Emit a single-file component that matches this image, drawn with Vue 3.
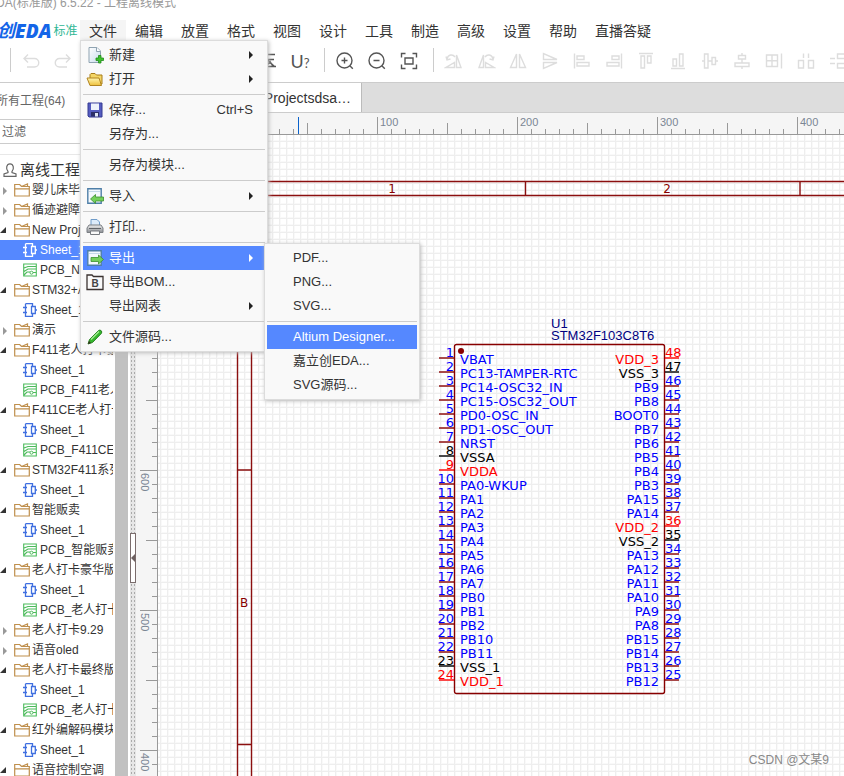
<script setup>
const menus = ['文件', '编辑', '放置', '格式', '视图', '设计', '工具', '制造', '高级', '设置', '帮助', '直播答疑']

const fileMenu = [
  { text: '新建', icon: 'm-new', more: true },
  { text: '打开', icon: 'm-open', more: true },
  { line: true },
  { text: '保存...', icon: 'm-save', key: 'Ctrl+S' },
  { text: '另存为...' },
  { line: true },
  { text: '另存为模块...' },
  { line: true },
  { text: '导入', icon: 'm-import', more: true },
  { line: true },
  { text: '打印...', icon: 'm-print' },
  { line: true },
  {
    text: '导出',
    icon: 'm-export',
    more: true,
    on: true,
    sub: [
      { text: 'PDF...' },
      { text: 'PNG...' },
      { text: 'SVG...' },
      { line: true },
      { text: 'Altium Designer...', on: true },
      { text: '嘉立创EDA...' },
      { text: 'SVG源码...' }
    ]
  },
  { text: '导出BOM...', icon: 'm-bom' },
  { text: '导出网表', more: true },
  { line: true },
  { text: '文件源码...', icon: 'm-pen' }
]

const editTools = [
  { id: 't-undo', label: '撤销' },
  { id: 't-redo', label: '重做' }
]
const viewTools = [
  { id: 't-in', label: '放大' },
  { id: 't-out', label: '缩小' },
  { id: 't-fit', label: '适合窗口' }
]
const alignTools = [
  { id: 't-rotl', label: '左旋转' },
  { id: 't-rotr', label: '右旋转' },
  { id: 't-fliph', label: '水平翻转' },
  { id: 't-flipv', label: '垂直翻转' },
  { id: 't-al', label: '左对齐' },
  { id: 't-ar', label: '右对齐' },
  { id: 't-at', label: '顶部对齐' },
  { id: 't-ab', label: '底部对齐' },
  { id: 't-cv', label: '垂直居中' },
  { id: 't-ch', label: '水平居中' },
  { id: 't-grid', label: '对齐网格' },
  { id: 't-dh', label: '水平等距' },
  { id: 't-dv', label: '垂直等距' }
]

const sheet = { kind: 'sheet', text: 'Sheet_1' }
const tree = [
  { kind: 'folder', text: '婴儿床毕业设计' },
  { kind: 'folder', text: '循迹避障小车' },
  { kind: 'folder', open: true, text: 'New Project' },
  { kind: 'sheet', text: 'Sheet_1', on: true },
  { kind: 'pcb', text: 'PCB_New Project' },
  { kind: 'folder', open: true, text: 'STM32+A9G' },
  sheet,
  { kind: 'folder', text: '演示' },
  { kind: 'folder', open: true, text: 'F411老人打卡豪华' },
  sheet,
  { kind: 'pcb', text: 'PCB_F411老人打卡' },
  { kind: 'folder', open: true, text: 'F411CE老人打卡' },
  sheet,
  { kind: 'pcb', text: 'PCB_F411CE老人' },
  { kind: 'folder', open: true, text: 'STM32F411系列' },
  sheet,
  { kind: 'folder', open: true, text: '智能贩卖' },
  sheet,
  { kind: 'pcb', text: 'PCB_智能贩卖' },
  { kind: 'folder', open: true, text: '老人打卡豪华版' },
  sheet,
  { kind: 'pcb', text: 'PCB_老人打卡' },
  { kind: 'folder', text: '老人打卡9.29' },
  { kind: 'folder', text: '语音oled' },
  { kind: 'folder', open: true, text: '老人打卡最终版' },
  sheet,
  { kind: 'pcb', text: 'PCB_老人打卡' },
  { kind: 'folder', open: true, text: '红外编解码模块' },
  sheet,
  { kind: 'folder', open: true, text: '语音控制空调' }
]

// Ruler ticks: one every 14px, a long labelled one every ten.
const ticks = Array.from({ length: 180 }, (_, i) => {
  const n = i - 10
  return { n, size: n % 10 === 0 ? 17 : n % 5 === 0 ? 11 : 5 }
})

const leftNames = ['VBAT', 'PC13-TAMPER-RTC', 'PC14-OSC32_IN', 'PC15-OSC32_OUT', 'PD0-OSC_IN', 'PD1-OSC_OUT', 'NRST', 'VSSA', 'VDDA', 'PA0-WKUP', 'PA1', 'PA2', 'PA3', 'PA4', 'PA5', 'PA6', 'PA7', 'PB0', 'PB1', 'PB2', 'PB10', 'PB11', 'VSS_1', 'VDD_1']
const rightNames = ['VDD_3', 'VSS_3', 'PB9', 'PB8', 'BOOT0', 'PB7', 'PB6', 'PB5', 'PB4', 'PB3', 'PA15', 'PA14', 'VDD_2', 'VSS_2', 'PA13', 'PA12', 'PA11', 'PA10', 'PA9', 'PA8', 'PB15', 'PB14', 'PB13', 'PB12']
const kindOf = (name) => (name.startsWith('VDD') ? 'power' : name.startsWith('VSS') ? 'ground' : 'io')
const leftPins = leftNames.map((name, i) => ({ name, no: i + 1, y: 14 + i * 14, kind: kindOf(name) }))
const rightPins = rightNames.map((name, i) => ({ name, no: 48 - i, y: 14 + i * 14, kind: kindOf(name) }))
</script>

<template>
  <div class="app">
    <svg class="defs" aria-hidden="true">
      <defs>
        <linearGradient id="g-page" x1="0" y1="0" x2="1" y2="1">
          <stop offset="0" stop-color="#ffffff" /><stop offset="1" stop-color="#c9dced" />
        </linearGradient>
        <linearGradient id="g-gold" x1="0" y1="0" x2="0" y2="1">
          <stop offset="0" stop-color="#fff6ae" /><stop offset="1" stop-color="#edbf3c" />
        </linearGradient>
        <linearGradient id="g-print" x1="0" y1="0" x2="0" y2="1">
          <stop offset="0" stop-color="#ececec" /><stop offset="1" stop-color="#8b8f94" />
        </linearGradient>
      </defs>
      <symbol id="m-new" viewBox="0 0 18 18">
        <path d="M3 1.500h8l3.500 3.500v11.500H3z" fill="url(#g-page)" stroke="#8fa3b1" />
        <path d="M10.500 1.500v4h4" fill="#fff" stroke="#8fa3b1" />
        <path d="M10 12h2.500V9.500h2.500V12h2.500v2.500H15V17h-2.500v-2.500H10z" fill="#3fc12f" stroke="#218a1b" stroke-width=".8" />
      </symbol>
      <symbol id="m-open" viewBox="0 0 18 18">
        <path d="M4 14V4.500l1-1h4l1.500 1.500h5.500v9z" fill="#f3d565" stroke="#a87c18" />
        <path d="M1 8h12l2.500 7.500H4z" fill="url(#g-gold)" stroke="#b18420" />
      </symbol>
      <symbol id="m-save" viewBox="0 0 18 18">
        <path d="M2 2h14v14H3l-1-1z" fill="#555cc0" stroke="#343a92" />
        <path d="M5 2.500h8V9H5z" fill="#eef3fb" />
        <path d="M5 11h8v4.500H5z" fill="#2c2f68" />
        <path d="M9 12h3v3.500H9z" fill="#dfe6f5" />
      </symbol>
      <symbol id="m-import" viewBox="0 0 18 18">
        <path d="M1.800 1.800h13.400v14.400H1.800z" fill="#f4f9fd" stroke="#4f7fa8" stroke-width="1.400" />
        <path d="M3 4.500h11" stroke="#c4d8e8" />
        <path d="M4.500 12l5-4.500V10H17.500v4h-8v2.500z" fill="#74d05b" stroke="#3c8f2e" stroke-width=".8" />
      </symbol>
      <symbol id="m-export" viewBox="0 0 18 18">
        <path d="M1.800 1.800h13.400v14.400H1.800z" fill="#f4f9fd" stroke="#4f7fa8" stroke-width="1.400" />
        <path d="M3 4.500h11" stroke="#c4d8e8" />
        <path d="M17.500 10.500l-5-4.500v2.500H5v4h7.500V15z" fill="#74d05b" stroke="#3c8f2e" stroke-width=".8" />
      </symbol>
      <symbol id="m-print" viewBox="0 0 18 18">
        <path d="M5 8V1.500h6l2.500 2.500v4z" fill="#dcebfa" stroke="#6f9cc9" />
        <path d="M3 7h12l2 3v4.500H1V10z" fill="url(#g-print)" stroke="#7b7f84" />
        <path d="M4.500 13h9v3.500h-9z" fill="#fafafa" stroke="#777b80" />
        <path d="M3 10.500h12" stroke="#5f6368" />
      </symbol>
      <symbol id="m-bom" viewBox="0 0 18 18">
        <path d="M1 16.500V2h5l1.500 1.500H17v13z" fill="none" stroke="#3b3331" stroke-width="1.300" />
        <text x="9" y="13.500" text-anchor="middle" font-family="Liberation Sans, sans-serif" font-size="10" font-weight="bold" fill="#444">B</text>
      </symbol>
      <symbol id="m-pen" viewBox="0 0 18 18">
        <path d="M2 16l1.500-4.500L12.500 2.500q1.500-1 2.700.2t.1 2.800L6.500 14.500z" fill="#36b52d" stroke="#1f7a1a" stroke-width=".9" />
        <path d="M5 11.500l8-8" stroke="#a5ef94" stroke-width="1.300" />
        <path d="M2 16l1-3 2 2z" fill="#3a2f20" />
      </symbol>

      <symbol id="t-undo" viewBox="0 0 20 20"><path d="M7 3.500L3 7.500l4 4M3 7.500h10.500a4.200 4.200 0 0 1 0 8.500H6" /></symbol>
      <symbol id="t-redo" viewBox="0 0 20 20"><path d="M13 3.500l4 4-4 4M17 7.500H6.500a4.200 4.200 0 0 0 0 8.500H14" /></symbol>
      <symbol id="t-in" viewBox="0 0 20 20"><circle cx="9.500" cy="9.500" r="7.500" /><path d="M14.800 14.800l3 3M6.500 9.500h6M9.500 6.500v6" /></symbol>
      <symbol id="t-out" viewBox="0 0 20 20"><circle cx="9.500" cy="9.500" r="7.500" /><path d="M14.800 14.800l3 3M6.500 9.500h6" /></symbol>
      <symbol id="t-fit" viewBox="0 0 20 20"><path d="M2.500 6.500v-4h4M13.500 2.500h4v4M17.500 13.500v4h-4M6.500 17.500h-4v-4M6 7h8v6H6z" /></symbol>
      <symbol id="t-cross" viewBox="0 0 20 20"><path d="M5 3.500h12M7 8.500h9M9 8.500l7.500 7H18M8 15.500l4-5 3 5z" /></symbol>
      <symbol id="t-rotl" viewBox="0 0 20 20"><path d="M2 16.500h8.500v-5zM12.500 4v12.500H17zM3 8c1-5 6-5 8-2M2 5.500L3 9l3.500-1" /></symbol>
      <symbol id="t-rotr" viewBox="0 0 20 20"><path d="M18 16.500H9.500v-5zM7.500 4v12.500H3zM17 8c-1-5-6-5-8-2M18 5.500L17 9l-3.500-1" /></symbol>
      <symbol id="t-fliph" viewBox="0 0 20 20"><path d="M8.500 3v13.500h-6zM11.500 3v13.500h6z" /></symbol>
      <symbol id="t-flipv" viewBox="0 0 20 20"><path d="M3.500 8.500h13.500l-13.500-6zM3.500 11.500h13.500l-13.500 6z" /></symbol>
      <symbol id="t-al" viewBox="0 0 20 20"><path d="M2.500 2.500v15M5 5h7v3.500H5zM5 11.500h12V15H5z" /></symbol>
      <symbol id="t-ar" viewBox="0 0 20 20"><path d="M17.500 2.500v15M8 5h7v3.500H8zM3 11.500h12V15H3z" /></symbol>
      <symbol id="t-at" viewBox="0 0 20 20"><path d="M3 2.500h14M5 5h3.500v12H5zM11.500 5H15v7h-3.500z" /></symbol>
      <symbol id="t-ab" viewBox="0 0 20 20"><path d="M3 17.500h14M5 8h3.500v7H5zM11.500 3H15v12h-3.500z" /></symbol>
      <symbol id="t-cv" viewBox="0 0 20 20"><path d="M2 10h2.500M8 10h4M15.500 10H18M4.500 3H8v14H4.500zM12 6.500h3.500v7H12z" /></symbol>
      <symbol id="t-ch" viewBox="0 0 20 20"><path d="M10 2v2.500M10 8v4M10 15.500V18M6.500 4.500h7V8h-7zM3 12h14v3.500H3z" /></symbol>
      <symbol id="t-grid" viewBox="0 0 20 20"><path d="M2.500 4h11v11.500h-11zM2.500 9.700h11M8 4v11.500M17.500 2.500v15" /></symbol>
      <symbol id="t-dh" viewBox="0 0 20 20"><path d="M7.500 2.500V7M12.500 2.500V7M2.500 9.500h5V17h-5zM12.500 9.500h5V17h-5z" /></symbol>
      <symbol id="t-dv" viewBox="0 0 20 20"><path d="M2 7.500h5M2 12.500h5M9.500 3h8v4.500h-8zM9.500 12.500h8V17h-8z" /></symbol>

      <symbol id="i-folder" viewBox="0 0 16 16">
        <path d="M.700 14V2.500h5l1.800 2H15.300V14zM.700 6.800h14.600M7.500 4.500l6-2.500v2.500" fill="none" stroke="#bf8f4d" stroke-width="1.200" />
      </symbol>
      <symbol id="i-sheet" viewBox="0 0 14 14">
        <path d="M2.500.700h7V3M2.500.700v12.800h7V11M0 4.500h4M0 9.500h4M8.500 3.500h3.800v7H8.500zM12.300 7h1.700" fill="none" stroke="currentColor" stroke-width="1.300" />
      </symbol>
      <symbol id="i-pcb" viewBox="0 0 14 14">
        <path d="M.700 1h12.600v12H.700zM1 5l4-1.500h8M1 8.500l4-2.500h8M1 12l3-3h3M10 9.500h3" fill="none" stroke="#4cbb5c" stroke-width="1.100" />
        <circle cx="8.500" cy="9.700" r="1.500" fill="none" stroke="#4cbb5c" />
      </symbol>
      <symbol id="i-user" viewBox="0 0 14 14">
        <path d="M5 8.500C2.500 6 3.500.800 7 .800s4.500 5.200 2 7.700v1l4 1.500v2.300H1V11l4-1.500z" fill="none" stroke="#666" stroke-width="1.200" />
      </symbol>
    </svg>

    <div class="title">DA(标准版) 6.5.22 - 工程离线模式</div>

    <nav class="menubar">
      <div class="logo"><span class="cn">创</span><b>EDA</b><small>标准</small></div>
      <div v-for="(m, i) in menus" :key="m" class="entry">
        <button class="top" :class="{ active: i === 0 }">{{ m }}</button>
        <ul v-if="i === 0" class="popup">
          <li v-for="(it, k) in fileMenu" :key="k" :class="it.line ? 'line' : 'item'">
            <template v-if="!it.line">
              <button class="cmd" :class="{ on: it.on }">
                <span class="ico"><svg v-if="it.icon"><use :href="'#' + it.icon" /></svg></span>
                <span class="label">{{ it.text }}</span>
                <span v-if="it.key" class="key">{{ it.key }}</span>
                <i v-if="it.more" class="more"></i>
              </button>
              <ul v-if="it.sub" class="popup sub">
                <li v-for="(s, j) in it.sub" :key="j" :class="s.line ? 'line' : 'item'">
                  <button v-if="!s.line" class="cmd" :class="{ on: s.on }">
                    <span class="ico"></span><span class="label">{{ s.text }}</span>
                  </button>
                </li>
              </ul>
            </template>
          </li>
        </ul>
      </div>
    </nav>

    <div class="toolbar">
      <i class="sep"></i>
      <button v-for="t in editTools" :key="t.id" class="tool off" :aria-label="t.label"><svg><use :href="'#' + t.id" /></svg></button>
      <span class="room"></span>
      <button class="tool" aria-label="交叉选择"><svg><use href="#t-cross" /></svg></button>
      <button class="tool annotate" aria-label="标注"><span>U<small>?</small></span></button>
      <i class="sep"></i>
      <button v-for="t in viewTools" :key="t.id" class="tool" :aria-label="t.label"><svg><use :href="'#' + t.id" /></svg></button>
      <i class="sep"></i>
      <button v-for="t in alignTools" :key="t.id" class="tool off" :aria-label="t.label"><svg><use :href="'#' + t.id" /></svg></button>
    </div>

    <div class="body">
      <aside class="side">
        <div class="scope"><span>所有工程(64)</span></div>
        <input class="filter" type="text" placeholder="过滤" aria-label="过滤">
        <div class="list">
          <div class="owner"><svg><use href="#i-user" /></svg><span>离线工程</span></div>
          <ul>
            <li v-for="(n, i) in tree" :key="i" class="node" :class="[n.kind, { on: n.on }]">
              <i v-if="n.kind === 'folder'" class="twist" :class="{ open: n.open }"></i>
              <svg><use :href="'#i-' + n.kind" /></svg>
              <span>{{ n.text }}</span>
            </li>
          </ul>
        </div>
      </aside>
      <div class="scroll"></div>
      <div class="splitter"><button class="grip" aria-label="折叠面板"></button></div>

      <main class="main">
        <div class="tabs"><button class="tab">Projectsdsa…</button></div>
        <div class="editor">
          <div class="corner"></div>
          <svg class="ruler-h">
            <g v-for="t in ticks" :key="t.n" :transform="`translate(${219 + t.n * 14} 0)`">
              <path :d="`M.5 22v-${t.size + 1}`" />
              <text v-if="t.n % 10 === 0" x="3" y="13">{{ 100 + t.n * 10 }}</text>
            </g>
            <path class="cursor" d="M140.500 4v18" />
          </svg>
          <svg class="ruler-v">
            <g v-for="t in ticks" :key="t.n" :transform="`translate(0 ${55 + t.n * 14})`">
              <path :d="`M22 .5h-${t.size + 1}`" />
              <text v-if="t.n % 10 === 0" x="3" y="-5" transform="rotate(90)">{{ 800 - t.n * 10 }}</text>
            </g>
          </svg>
          <svg class="canvas">
            <defs>
              <pattern id="grid" width="7" height="7" patternUnits="userSpaceOnUse">
                <path d="M3.500 0v7M0 5.500h7" stroke="#f9f9f9" />
                <path d="M2.500 0v7M0 6.500h7" stroke="#eeeeee" />
              </pattern>
            </defs>
            <rect width="100%" height="100%" fill="url(#grid)" />
            <g class="frame" transform="translate(79 46)">
              <path d="M3000 .5H.5V3000M3000 14.500H14.500V3000" />
              <path d="M288.500 0v14M563 0v14M837.500 0v14M0 289h14M0 563.500h14" />
              <text x="155" y="12">1</text>
              <text x="430" y="12">2</text>
              <text x="7" y="426">B</text>
            </g>
            <g class="chip" transform="translate(296 209)">
              <rect x=".5" y=".5" width="210" height="349" rx="2" />
              <circle cx="7" cy="7" r="3" />
              <text class="ref" x="97" y="-16">U1</text>
              <text class="ref" x="97" y="-4">STM32F103C8T6</text>
              <g v-for="p in leftPins" :key="p.no" :class="p.kind">
                <path :d="`M0 ${p.y}h-15`" />
                <text x="0" :y="p.y - 1" text-anchor="end">{{ p.no }}</text>
                <text x="6" :y="p.y + 6">{{ p.name }}</text>
              </g>
              <g v-for="p in rightPins" :key="p.no" :class="p.kind">
                <path :d="`M211 ${p.y}h14`" />
                <text x="211" :y="p.y - 1">{{ p.no }}</text>
                <text x="205" :y="p.y + 6" text-anchor="end">{{ p.name }}</text>
              </g>
            </g>
          </svg>
        </div>
      </main>
    </div>
    <div class="mark">CSDN @文某9</div>
  </div>
</template>

<style>
body {
  background: #fff;
  overflow: hidden;
}
</style>

<style scoped>
.app {
  position: relative;
  display: flex;
  flex-direction: column;
  height: 100vh;
  overflow: hidden;
  color: #333;
  font: 12px "Liberation Sans", "Noto Sans CJK SC", sans-serif;
}
button {
  border: 0;
  padding: 0;
  background: none;
  color: inherit;
  font: inherit;
}
ul {
  list-style: none;
  margin: 0;
  padding: 0;
}
.defs {
  position: absolute;
  width: 0;
  height: 0;
}
.title {
  height: 24px;
  line-height: 14px;
  margin: -4px 0 0 -4px;
  color: #999;
  white-space: nowrap;
}
.menubar {
  display: flex;
  height: 22px;
  font-size: 14px;
  white-space: nowrap;
}
.logo {
  display: flex;
  align-items: center;
  width: 80px;
  line-height: 22px;
  color: #1465e8;
  overflow: hidden;
}
.logo .cn {
  margin-left: -3px;
  font-size: 18px;
  font-weight: bold;
  font-style: italic;
}
.logo b {
  margin-right: 2px;
  font: italic 800 19px/22px "Open Sans", sans-serif;
}
.logo small {
  font-size: 12px;
  color: #2fb795;
}
.entry {
  position: relative;
}
.top {
  height: 20px;
  padding: 0 9px;
  line-height: 22px;
}
.top.active {
  background: #f5f5f5;
}
.popup {
  position: absolute;
  z-index: 5;
  top: 20px;
  left: 0;
  width: 188px;
  box-sizing: border-box;
  padding: 2px;
  border: 1px solid #dcdcdc;
  background: #f9f9f9;
  box-shadow: 1px 1px 4px #bbb;
  font-size: 13px;
}
.popup.sub {
  top: -3px;
  left: 100%;
  margin-left: -1px;
  width: 156px;
}
.item {
  position: relative;
}
.line {
  height: 1px;
  margin: 3px 0;
  background: #ccc;
}
.cmd {
  display: flex;
  align-items: center;
  width: 100%;
  height: 24px;
  padding: 0 12px 0 3px;
  line-height: 24px;
  text-align: left;
}
.cmd.on {
  background: #5588ff;
  color: #fff;
}
.ico {
  width: 23px;
  height: 18px;
}
.ico svg {
  display: block;
  width: 18px;
  height: 18px;
}
.label {
  flex: 1;
}
.more {
  border: 4px solid transparent;
  border-left-color: #222;
  border-right: 0;
}
.on .more {
  border-left-color: #fff;
}
.toolbar {
  display: flex;
  align-items: center;
  height: 40px;
  padding-left: 2px;
  border-bottom: 1px solid #ccc;
}
.sep {
  flex: none;
  width: 1px;
  height: 24px;
  margin: 0 4px 4px 8px;
  background: #ccc;
}
.tool {
  flex: none;
  display: flex;
  align-items: center;
  justify-content: center;
  width: 32px;
  height: 32px;
  margin-bottom: 2px;
  color: #555;
}
.tool.off {
  color: #ddd;
}
.tool svg {
  width: 20px;
  height: 20px;
  fill: none;
  stroke: currentColor;
  stroke-width: 1.400;
}
.annotate {
  font: 18px Lato, sans-serif;
}
.annotate small {
  font-size: 13px;
}
.room {
  flex: none;
  width: 173px;
}
.body {
  flex: 1;
  display: flex;
  min-height: 0;
}
.side {
  width: 113px;
  overflow: hidden;
  white-space: nowrap;
}
.scope {
  height: 36px;
  line-height: 36px;
  border-bottom: 1px solid #ccc;
  color: #666;
}
.scope span {
  margin-left: -4px;
}
.filter {
  display: block;
  box-sizing: border-box;
  width: 100%;
  height: 24px;
  border: 0;
  border-bottom: 1px solid #ccc;
  padding: 0 2px;
  font: inherit;
}
.filter::placeholder {
  color: #666;
}
.list {
  margin-top: 10px;
  padding-top: 5px;
  border-top: 1px solid #e8e8e8;
}
.owner {
  display: flex;
  align-items: center;
  gap: 3px;
  height: 20px;
  padding-left: 3px;
  font-size: 15px;
  line-height: 20px;
}
.owner svg {
  flex: none;
  width: 14px;
  height: 14px;
}
.node {
  position: relative;
  display: flex;
  align-items: center;
  gap: 2px;
  height: 20px;
  padding-left: 14px;
  line-height: 20px;
}
.node span,
.owner span {
  height: 20px;
}
.node svg {
  flex: none;
  width: 16px;
  height: 16px;
}
.node.sheet,
.node.pcb {
  gap: 3px;
  padding-left: 23px;
}
.node.sheet svg,
.node.pcb svg {
  width: 14px;
  height: 14px;
}
.node.sheet svg {
  color: #3f6fe0;
}
.node.on {
  background: #5588ff;
  color: #fff;
}
.node.sheet.on svg {
  color: #fff;
}
.twist {
  position: absolute;
  left: 3px;
  top: 7px;
  border: 4px solid transparent;
  border-left-color: #999;
  border-right: 0;
}
.twist.open {
  left: 0;
  border: 0;
  border-left: 6px solid transparent;
  border-bottom: 6px solid #333;
}
.scroll {
  width: 13px;
  margin: 0 2px;
  background: #c1c1c1;
}
.splitter {
  display: flex;
  align-items: center;
  width: 6px;
  background: radial-gradient(circle, #aaa 25%, #e6e6e6 35%) 0 0 / 3px 4px;
}
.grip {
  box-sizing: border-box;
  width: 6px;
  height: 50px;
  margin-top: 256px;
  border: 1px solid #7a6c6c;
  background: #fff;
  display: flex;
  align-items: center;
  justify-content: center;
}
.grip::before {
  content: "";
  border: 4px solid transparent;
  border-right-color: #6d6060;
  border-left: 0;
}
.main {
  flex: 1;
  min-width: 0;
  display: flex;
  flex-direction: column;
}
.tabs {
  height: 29px;
  border-bottom: 1px solid #ccc;
  background: #ddd;
}
.tab {
  box-sizing: border-box;
  width: 226px;
  height: 29px;
  padding-right: 10px;
  border-right: 1px solid #bbb;
  background: #fff;
  text-align: right;
  font-size: 14px;
}
.editor {
  flex: 1;
  min-height: 0;
  display: grid;
  grid-template: 22px 1fr / 22px 1fr;
}
.corner,
.ruler-h,
.ruler-v {
  box-sizing: border-box;
  width: 100%;
  height: 100%;
  background: #f5f5f5;
  stroke: #999;
  overflow: hidden;
}
.ruler-h {
  border-bottom: 1px solid #999;
}
.ruler-v {
  border-right: 1px solid #999;
}
.ruler-h text,
.ruler-v text {
  stroke: none;
  fill: #7b8694;
  font-size: 11px;
}
.ruler-h .cursor {
  stroke: #0a62cc;
}
.canvas {
  width: 100%;
  height: 100%;
  overflow: hidden;
  font: 13px "DejaVu Sans", sans-serif;
}
.frame path {
  fill: none;
  stroke: #8b0f0f;
  stroke-width: 1.400;
}
.frame text {
  fill: #880000;
  font-size: 12px;
  text-anchor: middle;
}
.chip rect {
  fill: none;
  stroke: #880000;
  stroke-width: 1.400;
}
.chip circle {
  fill: #880000;
}
.chip path {
  stroke: #880000;
  stroke-width: 1.400;
}
.chip text {
  fill: #0000ff;
}
.chip .power text {
  fill: #ff0000;
}
.chip .power path {
  stroke: #ff0000;
}
.chip .ground text {
  fill: #000;
}
.chip .ground path {
  stroke: #000;
}
.chip .ref {
  fill: #000080;
  font-family: "Liberation Sans", sans-serif;
}
.mark {
  position: absolute;
  right: 15px;
  bottom: 8px;
  color: #888;
  font-size: 12px;
  line-height: 16px;
}
</style>
